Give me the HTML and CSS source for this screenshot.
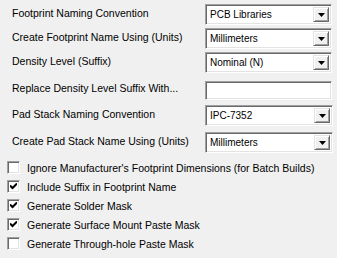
FILE: index.html
```html
<!DOCTYPE html>
<html>
<head>
<meta charset="utf-8">
<link rel="stylesheet" href="styles.css">
</head>
<body>
<div class="panel">
  <div class="rows">
    <div class="row r1">
      <span class="label">Footprint Naming Convention</span>
      <div class="combo"><span class="val">PCB Libraries</span><span class="btn"><svg width="7" height="4" viewBox="0 0 7 4"><path d="M0 0H7L3.5 4Z" fill="#000"/></svg></span></div>
    </div>
    <div class="row r2">
      <span class="label">Create Footprint Name Using (Units)</span>
      <div class="combo"><span class="val">Millimeters</span><span class="btn"><svg width="7" height="4" viewBox="0 0 7 4"><path d="M0 0H7L3.5 4Z" fill="#000"/></svg></span></div>
    </div>
    <div class="row r3">
      <span class="label">Density Level (Suffix)</span>
      <div class="combo"><span class="val">Nominal (N)</span><span class="btn"><svg width="7" height="4" viewBox="0 0 7 4"><path d="M0 0H7L3.5 4Z" fill="#000"/></svg></span></div>
    </div>
    <div class="row r4">
      <span class="label">Replace Density Level Suffix With...</span>
      <div class="textbox"></div>
    </div>
    <div class="row r5">
      <span class="label">Pad Stack Naming Convention</span>
      <div class="combo wide"><span class="val">IPC-7352</span><span class="btn"><svg width="7" height="4" viewBox="0 0 7 4"><path d="M0 0H7L3.5 4Z" fill="#000"/></svg></span></div>
    </div>
    <div class="row r6">
      <span class="label">Create Pad Stack Name Using (Units)</span>
      <div class="combo wide"><span class="val">Millimeters</span><span class="btn"><svg width="7" height="4" viewBox="0 0 7 4"><path d="M0 0H7L3.5 4Z" fill="#000"/></svg></span></div>
    </div>
  </div>
  <div class="checks">
    <div class="check"><span class="box"></span><span class="clabel">Ignore Manufacturer's Footprint Dimensions (for Batch Builds)</span></div>
    <div class="check"><span class="box"><svg width="7" height="7" viewBox="0 0 7 7"><path d="M0 2.5L2.5 5L7 0.5" fill="none" stroke="#000" stroke-width="2"/></svg></span><span class="clabel">Include Suffix in Footprint Name</span></div>
    <div class="check"><span class="box"><svg width="7" height="7" viewBox="0 0 7 7"><path d="M0 2.5L2.5 5L7 0.5" fill="none" stroke="#000" stroke-width="2"/></svg></span><span class="clabel">Generate Solder Mask</span></div>
    <div class="check"><span class="box"><svg width="7" height="7" viewBox="0 0 7 7"><path d="M0 2.5L2.5 5L7 0.5" fill="none" stroke="#000" stroke-width="2"/></svg></span><span class="clabel">Generate Surface Mount Paste Mask</span></div>
    <div class="check"><span class="box"></span><span class="clabel">Generate Through-hole Paste Mask</span></div>
  </div>
</div>
</body>
</html>
```
FILE: styles.css
```css
html, body {
  margin: 0;
  padding: 0;
  background: #f0f0f0;
}
body {
  width: 337px;
  height: 258px;
  overflow: hidden;
  font-family: "Liberation Sans", Arial, sans-serif;
  font-size: 10.5px;
  color: #000;
}
.panel {
  padding-top: 4px;
}
.rows {
  display: flex;
  flex-direction: column;
}
.row {
  display: flex;
  align-items: center;
  height: 21px;
  padding-left: 12px;
}
.r2, .r3 { margin-top: 3px; }
.r4 { margin-top: 8px; height: 19px; }
.r5 { margin-top: 5px; }
.r6 { margin-top: 6px; }
.label {
  width: 193px;
  white-space: nowrap;
  margin-bottom: 3px;
}
.r4 .label { margin-bottom: 6px; }
.combo, .textbox {
  box-sizing: border-box;
  width: 127px;
  height: 21px;
  background: #fff;
  border-top: 1px solid #a0a0a0;
  border-left: 1px solid #a0a0a0;
  border-right: 1px solid #fff;
  border-bottom: 1px solid #fff;
  box-shadow: inset 1px 1px 0 #696969, inset -1px -1px 0 #e3e3e3;
  display: flex;
  align-items: center;
  padding: 2px;
}
.combo.wide { width: 128px; }
.textbox { height: 19px; }
.val {
  flex: 1;
  padding-left: 2px;
  white-space: nowrap;
  font-size: 10px;
}
.btn {
  box-sizing: border-box;
  width: 16px;
  height: 15px;
  background: #f0f0f0;
  border-top: 1px solid #e3e3e3;
  border-left: 1px solid #e3e3e3;
  border-right: 1px solid #696969;
  border-bottom: 1px solid #696969;
  box-shadow: inset 1px 1px 0 #fff, inset -1px -1px 0 #a0a0a0;
  display: flex;
  align-items: center;
  justify-content: center;
}
.btn svg { display: block; margin-top: 1px; }
.checks {
  margin-top: 8px;
  padding-left: 7px;
  display: flex;
  flex-direction: column;
  gap: 6px;
}
.check {
  display: flex;
  align-items: center;
  height: 13px;
}
.box {
  box-sizing: border-box;
  width: 13px;
  height: 13px;
  background: #fff;
  border-top: 1px solid #a0a0a0;
  border-left: 1px solid #a0a0a0;
  border-right: 1px solid #fff;
  border-bottom: 1px solid #fff;
  box-shadow: inset 1px 1px 0 #696969, inset -1px -1px 0 #e3e3e3;
  display: flex;
  align-items: center;
  justify-content: center;
}
.clabel {
  margin-left: 7px;
  white-space: nowrap;
}
```
